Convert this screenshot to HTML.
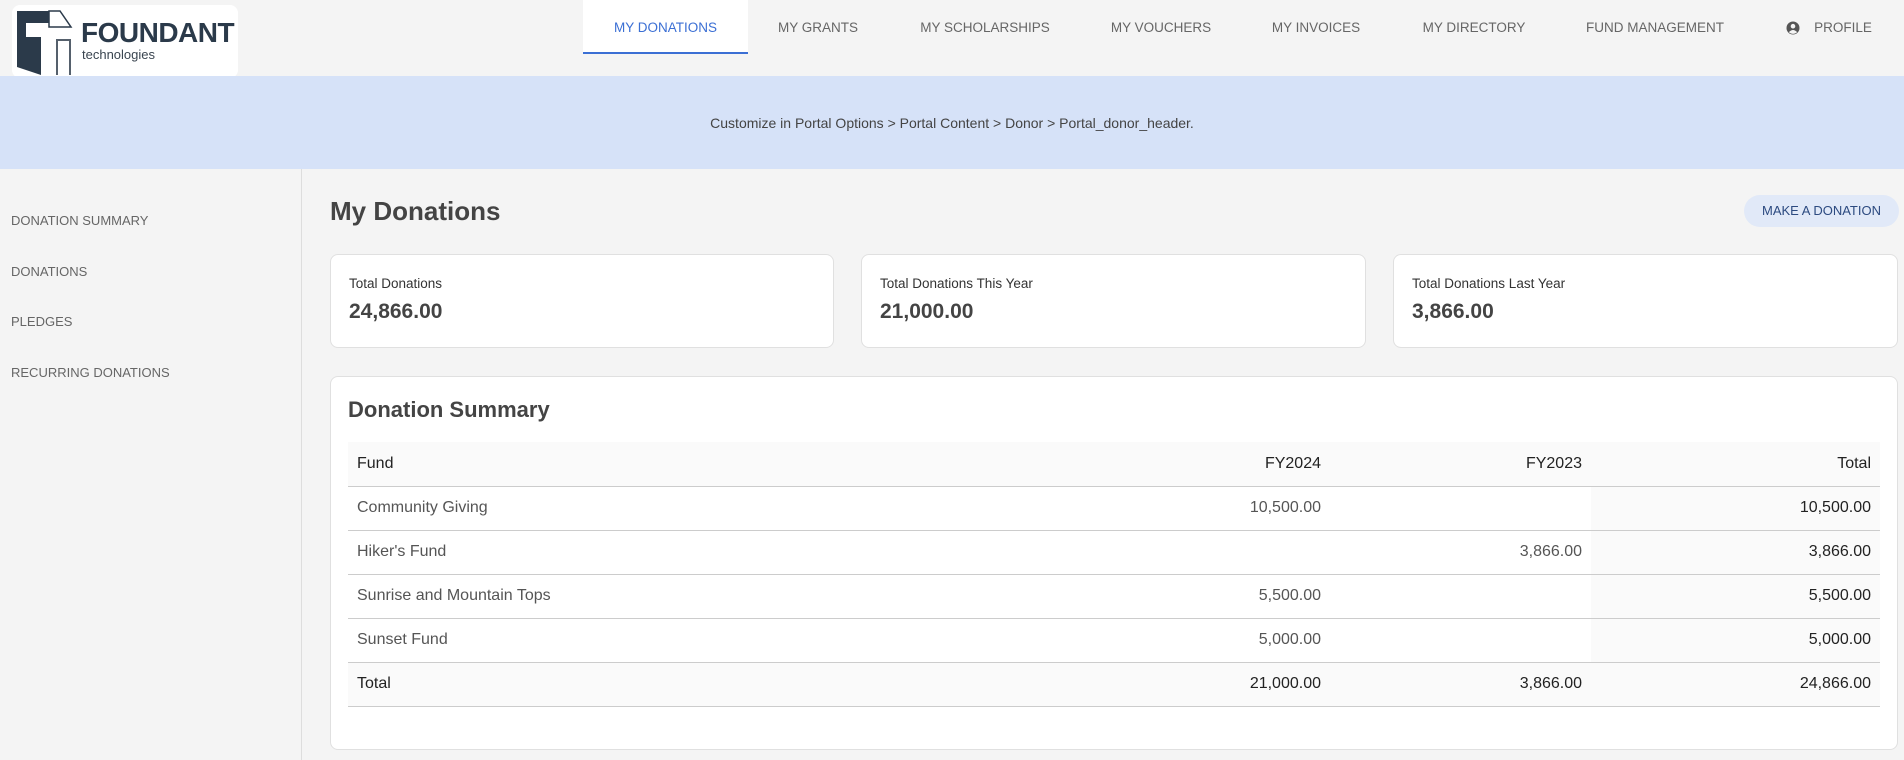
<!DOCTYPE html>
<html><head><meta charset="utf-8"><style>
*{box-sizing:border-box;margin:0;padding:0}
body{width:1904px;height:760px;background:#f4f4f4;font-family:"Liberation Sans",sans-serif;position:relative;overflow:hidden;color:#444}
.abs{position:absolute}
.logo{left:12px;top:5px;width:226px;height:73px;background:#fff;border-radius:8px}
.nav{top:0;height:54px;line-height:56px;font-size:13.5px;color:#666;transform:translateX(-50%);white-space:nowrap}
.tab{left:583px;top:0;width:165px;height:54px;background:#fff;border-bottom:2px solid #3b6fd4;color:#3b6fd4;font-size:13.5px;text-align:center;line-height:56px}
.banner{left:0;top:76px;width:1904px;height:93px;background:#d6e2f8;text-align:center;line-height:94px;font-size:14px;color:#444}
.side{left:0;top:169px;width:302px;height:591px;border-right:1px solid #ddd}
.si{left:11px;font-size:13px;color:#666}
.card{background:#fff;border:1px solid #e0e0e0;border-radius:8px}
.lbl{font-size:13.5px;color:#333;position:absolute;left:18px;top:21px}
.val{font-size:21px;font-weight:bold;color:#444;position:absolute;left:18px;top:45px}
table{border-collapse:collapse;position:absolute;left:348px;top:442px;width:1532px;font-size:16px}
td{height:44px;border-bottom:1px solid #ccc;padding:0 9px;color:#555}
tr.h td{background:#fafafa;color:#222;border-bottom:1px solid #ccc}
td.r{text-align:right}
td.t{background:#fafafa;color:#222;text-align:right}
tr.tot td{background:#fafafa;color:#222}
</style></head><body>
<div class="abs logo">
<svg class="abs" style="left:2px;top:2px" width="70" height="70" viewBox="0 0 70 70">
<polygon points="3,4 35,4 35,16 12,16 12,30 27,30 27,68 3,60" fill="#2b3a4a"/>
<polygon points="35,4 46,4 57,20 35,20" fill="#fff" stroke="#2b3a4a" stroke-width="1.5"/>
<path d="M43,68 V33 H56 V68" fill="none" stroke="#55606c" stroke-width="2"/>
</svg>
<div class="abs" style="left:69px;top:12px;font-size:28px;font-weight:bold;color:#2b3a4a;letter-spacing:-0.5px">FOUNDANT</div>
<div class="abs" style="left:70px;top:42px;font-size:13px;color:#3a4550">technologies</div>
</div>
<div class="abs tab">MY DONATIONS</div>
<div class="abs nav" style="left:818px">MY GRANTS</div>
<div class="abs nav" style="left:985px">MY SCHOLARSHIPS</div>
<div class="abs nav" style="left:1161px">MY VOUCHERS</div>
<div class="abs nav" style="left:1316px">MY INVOICES</div>
<div class="abs nav" style="left:1474px">MY DIRECTORY</div>
<div class="abs nav" style="left:1655px">FUND MANAGEMENT</div>
<svg class="abs" style="left:1786px;top:21px" width="14" height="14" viewBox="0 0 14 14"><circle cx="7" cy="7" r="6.5" fill="#555"/><circle cx="7" cy="5.2" r="2.3" fill="#f4f4f4"/><path d="M2.8,11.3 Q7,6.8 11.2,11.3 Q7,14.5 2.8,11.3Z" fill="#f4f4f4"/></svg>
<div class="abs nav" style="left:1843px">PROFILE</div>
<div class="abs banner">Customize in Portal Options &gt; Portal Content &gt; Donor &gt; Portal_donor_header.</div>
<div class="abs side"></div>
<div class="abs si" style="top:213px">DONATION SUMMARY</div>
<div class="abs si" style="top:264px">DONATIONS</div>
<div class="abs si" style="top:314px">PLEDGES</div>
<div class="abs si" style="top:365px">RECURRING DONATIONS</div>
<div class="abs" style="left:330px;top:196px;font-size:26px;font-weight:bold;color:#444">My Donations</div>
<div class="abs" style="left:1744px;top:195px;width:155px;height:32px;border-radius:16px;background:#e1e9f8;color:#2c4a80;font-size:13px;text-align:center;line-height:32px">MAKE A DONATION</div>
<div class="abs card" style="left:330px;top:254px;width:504px;height:94px"><div class="lbl">Total Donations</div><div class="val">24,866.00</div></div>
<div class="abs card" style="left:861px;top:254px;width:505px;height:94px"><div class="lbl">Total Donations This Year</div><div class="val">21,000.00</div></div>
<div class="abs card" style="left:1393px;top:254px;width:505px;height:94px"><div class="lbl">Total Donations Last Year</div><div class="val">3,866.00</div></div>
<div class="abs card" style="left:330px;top:376px;width:1568px;height:374px"></div>
<div class="abs" style="left:348px;top:397px;font-size:22px;font-weight:bold;color:#444">Donation Summary</div>
<table>
<colgroup><col style="width:713px"><col style="width:269px"><col style="width:261px"><col style="width:289px"></colgroup>
<tr class="h"><td>Fund</td><td class="r" style="color:#222">FY2024</td><td class="r" style="color:#222">FY2023</td><td class="r" style="color:#222">Total</td></tr>
<tr><td>Community Giving</td><td class="r">10,500.00</td><td class="r"></td><td class="t">10,500.00</td></tr>
<tr><td>Hiker's Fund</td><td class="r"></td><td class="r">3,866.00</td><td class="t">3,866.00</td></tr>
<tr><td>Sunrise and Mountain Tops</td><td class="r">5,500.00</td><td class="r"></td><td class="t">5,500.00</td></tr>
<tr><td>Sunset Fund</td><td class="r">5,000.00</td><td class="r"></td><td class="t">5,000.00</td></tr>
<tr class="tot"><td>Total</td><td class="r">21,000.00</td><td class="r">3,866.00</td><td class="r">24,866.00</td></tr>
</table>
</body></html>
